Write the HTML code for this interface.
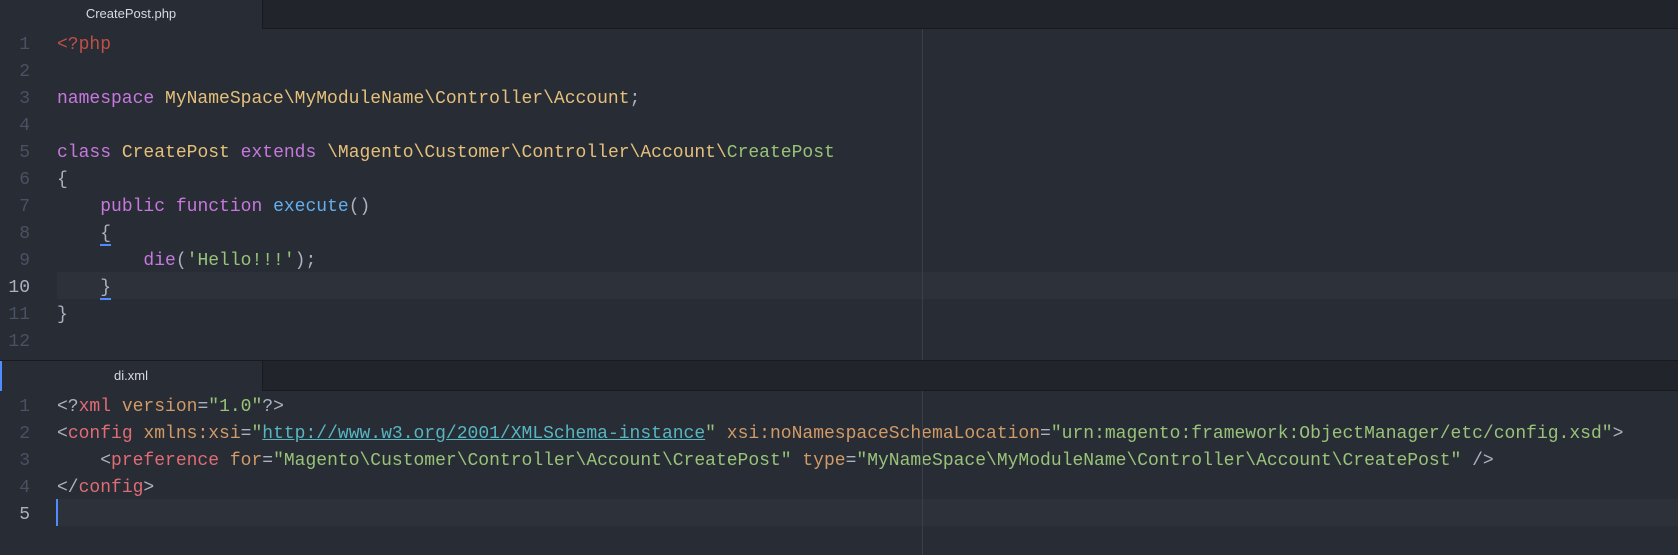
<!DOCTYPE html>
<html><head><meta charset="utf-8">
<style>
*{margin:0;padding:0;box-sizing:border-box}
body{width:1678px;height:555px;background:#282c34;overflow:hidden;position:relative;font-family:"Liberation Mono",monospace;font-size:18px;color:#abb2bf}
.tabbar{position:absolute;left:0;width:1678px;height:29px;background:#21252b;border-bottom:1px solid #181a1f}
.tab{position:absolute;left:0;top:0;width:263px;height:29px;background:#282c34;border-right:1px solid #181a1f;font-family:"Liberation Sans",sans-serif;font-size:13px;color:#d7dae0;text-align:center;line-height:28px}
.pane{position:absolute;left:0;width:1678px}
.ln{position:absolute;left:0;width:30px;text-align:right;color:#495162;height:27px;line-height:27px;margin-top:3px}
.ln.cur{color:#abb2bf}
.code{position:absolute;left:57px;height:27px;line-height:27px;white-space:pre;margin-top:3px}
.hl{position:absolute;left:57px;right:0;height:27px;background:#2c313a}
.guide{position:absolute;left:922px;width:1px;background:#3a3f4b;z-index:2}
.k{color:#c678dd}.c{color:#e5c07b}.s{color:#98c379}.f{color:#61afef}.t{color:#e06c75}.a{color:#d19a66}.p{color:#be5046}
.u{color:#56b6c2;text-decoration:underline}
.bm{border-bottom:2px solid #528bff}
</style></head><body>
<div class="tabbar" style="top:0"><div class="tab">CreatePost.php</div></div>
<div class="guide" style="top:29px;height:331px"></div>
<div class="pane" style="top:29px">
<div class="hl" style="top:243px"></div>
<div class="ln" style="top:0">1</div><div class="code" style="top:0"><span class="p">&lt;?php</span></div>
<div class="ln" style="top:27px">2</div>
<div class="ln" style="top:54px">3</div><div class="code" style="top:54px"><span class="k">namespace</span> <span class="c">MyNameSpace\MyModuleName\Controller\Account</span>;</div>
<div class="ln" style="top:81px">4</div>
<div class="ln" style="top:108px">5</div><div class="code" style="top:108px"><span class="k">class</span> <span class="c">CreatePost</span> <span class="k">extends</span> <span class="c">\Magento\Customer\Controller\Account\</span><span class="s">CreatePost</span></div>
<div class="ln" style="top:135px">6</div><div class="code" style="top:135px">{</div>
<div class="ln" style="top:162px">7</div><div class="code" style="top:162px">    <span class="k">public</span> <span class="k">function</span> <span class="f">execute</span>()</div>
<div class="ln" style="top:189px">8</div><div class="code" style="top:189px">    <span class="bm">{</span></div>
<div class="ln" style="top:216px">9</div><div class="code" style="top:216px">        <span class="k">die</span>(<span class="s">'Hello!!!'</span>);</div>
<div class="ln cur" style="top:243px">10</div><div class="code" style="top:243px">    <span class="bm">}</span></div>
<div class="ln" style="top:270px">11</div><div class="code" style="top:270px">}</div>
<div class="ln" style="top:297px">12</div>
</div>
<div class="tabbar" style="top:360px;height:31px;border-top:1px solid #181a1f"><div class="tab" style="height:30px;line-height:29px">di.xml</div><div style="position:absolute;left:0;top:0;width:2px;height:30px;background:#528bff"></div></div>
<div class="guide" style="top:391px;height:164px"></div>
<div class="pane" style="top:391px">
<div class="hl" style="top:108px"></div>
<div style="position:absolute;left:56px;top:108px;width:2px;height:27px;background:#528bff"></div>
<div class="ln" style="top:0">1</div><div class="code" style="top:0">&lt;?<span class="t">xml</span> <span class="a">version</span>=<span class="s">"1.0"</span>?&gt;</div>
<div class="ln" style="top:27px">2</div><div class="code" style="top:27px">&lt;<span class="t">config</span> <span class="a">xmlns:xsi</span>=<span class="s">"</span><span class="u">http://www.w3.org/2001/XMLSchema-instance</span><span class="s">"</span> <span class="a">xsi:noNamespaceSchemaLocation</span>=<span class="s">"urn:magento:framework:ObjectManager/etc/config.xsd"</span>&gt;</div>
<div class="ln" style="top:54px">3</div><div class="code" style="top:54px">    &lt;<span class="t">preference</span> <span class="a">for</span>=<span class="s">"Magento\Customer\Controller\Account\CreatePost"</span> <span class="a">type</span>=<span class="s">"MyNameSpace\MyModuleName\Controller\Account\CreatePost"</span> /&gt;</div>
<div class="ln" style="top:81px">4</div><div class="code" style="top:81px">&lt;/<span class="t">config</span>&gt;</div>
<div class="ln cur" style="top:108px">5</div>
</div>
</body></html>
